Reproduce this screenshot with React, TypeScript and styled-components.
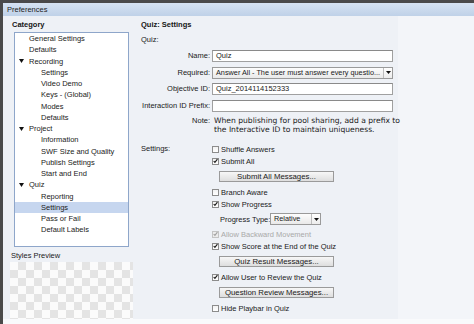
import React from "react";
import styled, { createGlobalStyle } from "styled-components";

const Global = createGlobalStyle`
  html, body { margin: 0; padding: 0; }
  body {
    width: 474px; height: 324px; overflow: hidden;
    font-family: "Liberation Sans", Arial, sans-serif;
    font-size: 7.5px; color: #1a1a1a;
  }
  * { box-sizing: border-box; }
`;

const Window = styled.div`
  width: 474px; height: 324px;
  background: #4a4a4a;
  padding: 3px 0 0 3px;
  display: flex; flex-direction: column;
`;

const TitleBar = styled.div`
  height: 13px;
  background: linear-gradient(#d6e3f2, #bfd1e8);
  padding-left: 4px;
  display: flex; align-items: center;
  font-size: 7.5px; color: #1b1b1b;
`;

const Body = styled.div`
  flex: 1; display: flex;
  background: #eef1f6;
`;

const Footer = styled.div`
  height: 5px; background: #f9fafc;
`;

const LeftPanel = styled.div`
  width: 132px; display: flex; flex-direction: column;
`;

const Heading = styled.div<{ $ml?: number; $mt?: number }>`
  font-weight: bold; line-height: 10px;
  margin: ${(p) => p.$mt ?? 4}px 0 0 ${(p) => p.$ml ?? 9}px;
  color: #151515;
`;

const Plain = styled.div<{ $ml?: number; $mt?: number; $lh?: number }>`
  line-height: ${(p) => p.$lh ?? 10}px;
  margin: ${(p) => p.$mt ?? 4}px 0 0 ${(p) => p.$ml ?? 0}px;
`;

const ListBox = styled.div`
  margin: 2px 0 0 11px;
  width: 115px; height: 215px;
  border: 1px solid #8ea6ca;
  background: #fff;
`;

const Row = styled.div<{ $level: number; $selected?: boolean }>`
  height: 11.25px; display: flex; align-items: center;
  padding-left: ${(p) => (p.$level === 2 ? 26 : 14)}px;
  background: ${(p) => (p.$selected ? "#c6d6ef" : "transparent")};
  position: relative;
  color: #222;
  white-space: nowrap;
`;

const Arrow = styled.svg`
  position: absolute; left: 4px; top: 3.5px;
  width: 5px; height: 4px;
`;

const Checker = styled.div`
  margin: 1px 0 0 7px; width: 123px; flex: 1;
  background: repeating-conic-gradient(#e4e4e4 0% 25%, #fbfbfb 0% 50%) 0 0 / 16px 16px;
`;

const RightPanel = styled.div`
  flex: 1; padding-left: 6px;
  background: linear-gradient(to right, #eef1f6 0, #eef1f6 263px, #f3f5f9 263px);
  display: flex; flex-direction: column;
`;

const FormGrid = styled.div`
  margin-top: 5px;
  display: grid;
  grid-template-columns: 69px 181px;
  column-gap: 2px; row-gap: 4.7px;
  grid-auto-rows: 12px;
`;

const Label = styled.div<{ $lh?: number }>`
  text-align: right; line-height: ${(p) => p.$lh ?? 12}px; white-space: nowrap;
`;

const Input = styled.div`
  height: 12px; border: 1px solid #a0a0a0; border-top-color: #8a8a8a;
  background: #fff; padding-left: 3px;
  line-height: 10px; white-space: nowrap; overflow: hidden;
`;

const Select = styled.div<{ $w?: number }>`
  height: 12px; ${(p) => (p.$w ? `width: ${p.$w}px;` : "")}
  border: 1px solid #9a9a9a;
  background: linear-gradient(#fdfdfd, #e9e9e9);
  display: flex; align-items: stretch;
`;

const SelectText = styled.div`
  flex: 1; padding-left: 3px; line-height: 10px;
  font-size: 7.3px;
  white-space: nowrap; overflow: hidden;
`;

const SelectArrow = styled.div`
  width: 9px; border-left: 1px solid #bdbdbd;
  background: linear-gradient(#ffffff, #ececec);
  display: flex; align-items: center; justify-content: center;
`;

const NoteGrid = styled.div`
  margin-top: 3.5px;
  display: grid; grid-template-columns: 69px auto; column-gap: 4px;
  line-height: 9px;
`;

const NoteText = styled.div`
  font-family: "DejaVu Sans", Verdana, sans-serif;
  font-size: 7.6px;
  white-space: nowrap;
`;

const SettingsGrid = styled.div`
  margin-top: 9.5px;
  display: grid; grid-template-columns: 69px auto; column-gap: 2px;
`;

const OptList = styled.div`
  display: flex; flex-direction: column;
`;

const CheckRow = styled.div<{ $disabled?: boolean }>`
  height: 12px; display: flex; align-items: center; gap: 2px;
  color: ${(p) => (p.$disabled ? "#a9a9a9" : "#1a1a1a")};
  white-space: nowrap;
`;

const Box = styled.div<{ $disabled?: boolean }>`
  width: 7px; height: 7px;
  border: 1px solid ${(p) => (p.$disabled ? "#c4c4c4" : "#8c8c8c")};
  background: ${(p) => (p.$disabled ? "#ececec" : "linear-gradient(#f2f2f2, #ffffff)")};
  display: flex; align-items: center; justify-content: center;
`;

const Button = styled.div`
  margin: 4px 0 4px 7px;
  width: 115px; height: 11px;
  border: 1px solid #9a9a9a;
  background: linear-gradient(#f7f7f7, #dedede);
  display: flex; align-items: center; justify-content: center;
  font-size: 7.8px;
  color: #1a1a1a;
`;

const ProgressRow = styled.div`
  margin: 3px 0; padding-left: 8px;
  display: flex; align-items: center; gap: 2px; height: 12px;
`;

const ProgLabel = styled.div`
  width: 48px; white-space: nowrap;
`;

const DownTri = () => (
  <svg width="5" height="3" viewBox="0 0 5 3">
    <polygon points="0,0 5,0 2.5,3" fill="#111" />
  </svg>
);

const Check = ({ disabled }: { disabled?: boolean }) => (
  <svg width="6" height="6" viewBox="0 0 6 6">
    <polyline points="0.8,3 2.3,4.7 5.3,0.8" fill="none" stroke={disabled ? "#a0a0a0" : "#1a1a1a"} strokeWidth="1.3" />
  </svg>
);

const CB = ({ label, checked, disabled }: { label: string; checked?: boolean; disabled?: boolean }) => (
  <CheckRow $disabled={disabled}>
    <Box $disabled={disabled}>{checked && <Check disabled={disabled} />}</Box>
    <span>{label}</span>
  </CheckRow>
);

const tree: { label: string; level: number; open?: boolean; selected?: boolean }[] = [
  { label: "General Settings", level: 1 },
  { label: "Defaults", level: 1 },
  { label: "Recording", level: 1, open: true },
  { label: "Settings", level: 2 },
  { label: "Video Demo", level: 2 },
  { label: "Keys - (Global)", level: 2 },
  { label: "Modes", level: 2 },
  { label: "Defaults", level: 2 },
  { label: "Project", level: 1, open: true },
  { label: "Information", level: 2 },
  { label: "SWF Size and Quality", level: 2 },
  { label: "Publish Settings", level: 2 },
  { label: "Start and End", level: 2 },
  { label: "Quiz", level: 1, open: true },
  { label: "Reporting", level: 2 },
  { label: "Settings", level: 2, selected: true },
  { label: "Pass or Fail", level: 2 },
  { label: "Default Labels", level: 2 },
];

export default function App() {
  return (
    <>
      <Global />
      <Window>
        <TitleBar>Preferences</TitleBar>
        <Body>
          <LeftPanel>
            <Heading>Category</Heading>
            <ListBox>
              {tree.map((t, i) => (
                <Row key={i} $level={t.level} $selected={t.selected}>
                  {t.open && (
                    <Arrow viewBox="0 0 5 4">
                      <polygon points="0,0 5,0 2.5,4" fill="#111" />
                    </Arrow>
                  )}
                  {t.label}
                </Row>
              ))}
            </ListBox>
            <Plain $ml={8} $mt={4}>Styles Preview</Plain>
            <Checker />
          </LeftPanel>
          <RightPanel>
            <Heading $ml={0}>Quiz: Settings</Heading>
            <Plain $mt={5}>Quiz:</Plain>
            <FormGrid>
              <Label>Name:</Label>
              <Input>Quiz</Input>
              <Label>Required:</Label>
              <Select>
                <SelectText>Answer All - The user must answer every questio...</SelectText>
                <SelectArrow><DownTri /></SelectArrow>
              </Select>
              <Label>Objective ID:</Label>
              <Input>Quiz_2014114152333</Input>
              <Label>Interaction ID Prefix:</Label>
              <Input />
            </FormGrid>
            <NoteGrid>
              <Label $lh={9}>Note:</Label>
              <NoteText>
                When publishing for pool sharing, add a prefix to
                <br />
                the Interactive ID to maintain uniqueness.
              </NoteText>
            </NoteGrid>
            <SettingsGrid>
              <Plain $mt={0} $lh={12}>Settings:</Plain>
              <OptList>
                <CB label="Shuffle Answers" />
                <CB label="Submit All" checked />
                <Button>Submit All Messages...</Button>
                <CB label="Branch Aware" />
                <CB label="Show Progress" checked />
                <ProgressRow>
                  <ProgLabel>Progress Type:</ProgLabel>
                  <Select $w={51}>
                    <SelectText>Relative</SelectText>
                    <SelectArrow><DownTri /></SelectArrow>
                  </Select>
                </ProgressRow>
                <CB label="Allow Backward Movement" checked disabled />
                <CB label="Show Score at the End of the Quiz" checked />
                <Button>Quiz Result Messages...</Button>
                <CB label="Allow User to Review the Quiz" checked />
                <Button>Question Review Messages...</Button>
                <CB label="Hide Playbar in Quiz" />
              </OptList>
            </SettingsGrid>
          </RightPanel>
        </Body>
        <Footer />
      </Window>
    </>
  );
}
